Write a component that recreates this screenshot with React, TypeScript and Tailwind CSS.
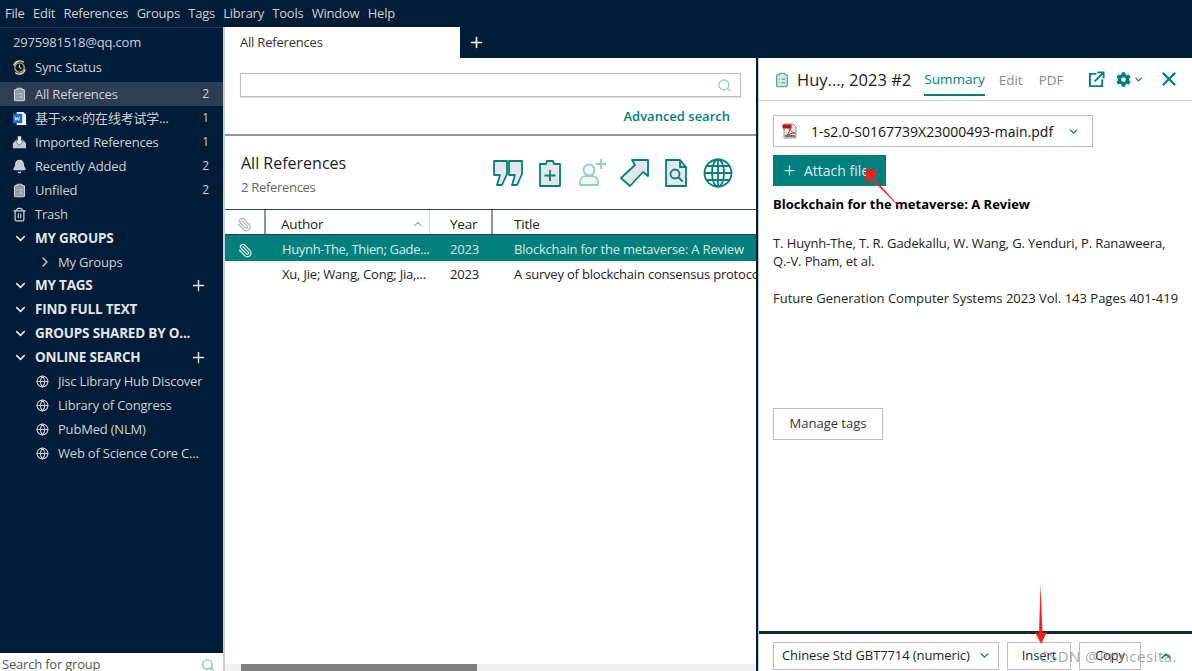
import {
  Bell,
  ChevronDown,
  ChevronRight,
  ChevronUp,
  ClipboardList,
  Globe,
  Paperclip,
  Plus,
  Search,
  Trash2,
  X,
} from 'lucide-react';
import { FaCog } from 'react-icons/fa';

const menus = ['File', 'Edit', 'References', 'Groups', 'Tags', 'Library', 'Tools', 'Window', 'Help'];
const searches = ['Jisc Library Hub Discover', 'Library of Congress', 'PubMed (NLM)', 'Web of Science Core C...'];

function SyncIcon() {
  return (
    <svg viewBox="0 0 16 16" className="size-[15px]" fill="none">
      <circle cx="8" cy="8" r="5" stroke="#d9a441" strokeWidth="1.4" />
      <path d="M2 6a6.5 6.5 0 0 1 10.5-3.5M14 10a6.5 6.5 0 0 1-10.5 3.5" stroke="#d5dade" strokeWidth="1.5" />
      <path d="M8 5v3l2 1" stroke="#d5dade" strokeWidth="1.2" />
    </svg>
  );
}

function WordIcon() {
  return (
    <svg viewBox="0 0 16 16" className="size-[15px]">
      <path d="M5 1h7l3 3v11H5z" fill="#fff" />
      <rect x="1" y="3" width="10" height="10" rx="1" fill="#1769d6" />
      <path d="M3 6l1 4 1.5-3L7 10l1-4" stroke="#fff" strokeWidth="1" fill="none" />
    </svg>
  );
}

function ImportIcon() {
  return (
    <svg viewBox="0 0 16 16" className="size-[15px]">
      <path d="M1 14V9l3-4h8l3 4v5z" fill="#c3cad1" />
      <path d="M6 1h4v5h2.5L8 11 3.5 6H6z" fill="#eef1f3" stroke="#001c37" strokeWidth="0.6" />
    </svg>
  );
}

function SideItem({ icon, label, count, active }: { icon: React.ReactNode; label: string; count?: number; active?: boolean }) {
  return (
    <div className={`flex h-6 items-center pl-3 pr-[14px] text-[#ccd2d8] ${active ? 'bg-[#2c3e52]' : ''}`}>
      <span className="flex w-[23px] shrink-0">{icon}</span>
      <span className="mt-0.5 flex-1 truncate">{label}</span>
      {count !== undefined && <span className="text-xs">{count}</span>}
    </div>
  );
}

function SideHead({ label, plus }: { label: string; plus?: boolean }) {
  return (
    <div className="flex h-6 items-center pl-[13px] pr-4 text-[13.5px] font-bold text-[#e2e6e9]">
      <ChevronDown className="mr-[7px] size-[15px] shrink-0" strokeWidth={2.5} />
      <span className="flex-1 truncate">{label}</span>
      {plus && <Plus className="size-[17px]" strokeWidth={2} />}
    </div>
  );
}

function Sidebar() {
  const listIcon = <ClipboardList className="size-[15px]" fill="#8f9aa5" strokeWidth={1.8} />;
  return (
    <aside className="flex w-[225px] shrink-0 flex-col border-r-2 border-[#c9d0d6] bg-[#001c37] text-[13px] tracking-[-0.2px]">
      <div className="border-t border-[#1d3550] pt-[3px]">
        <div className="flex h-6 items-center pl-[13px] text-[#ccd2d8]">2975981518@qq.com</div>
        <SideItem icon={<SyncIcon />} label="Sync Status" />
      </div>
      <div className="mt-[3px]">
        <SideItem active icon={listIcon} label="All References" count={2} />
        <SideItem icon={<WordIcon />} label="基于×××的在线考试学..." count={1} />
        <SideItem icon={<ImportIcon />} label="Imported References" count={1} />
        <SideItem icon={<Bell className="size-[15px]" fill="#c3cad1" />} label="Recently Added" count={2} />
        <SideItem icon={listIcon} label="Unfiled" count={2} />
        <SideItem icon={<Trash2 className="size-[15px]" />} label="Trash" />
        <SideHead label="MY GROUPS" />
        <div className="flex h-[23px] items-center pl-[37px] text-[#ccd2d8]">
          <ChevronRight className="mr-[5px] size-[16px]" />
          <span className="mt-0.5">My Groups</span>
        </div>
        <SideHead label="MY TAGS" plus />
        <SideHead label="FIND FULL TEXT" />
        <SideHead label="GROUPS SHARED BY O..." />
        <SideHead label="ONLINE SEARCH" plus />
        {searches.map((s) => (
          <div key={s} className="flex h-6 items-center pl-9 pr-3 text-[#ccd2d8]">
            <Globe className="mr-[9px] size-[13px] shrink-0" strokeWidth={2} />
            <span className="mt-0.5 truncate">{s}</span>
          </div>
        ))}
      </div>
      <div className="mt-auto flex h-[18px] items-center overflow-hidden bg-white pl-0.5 pr-2 pt-[5px] text-[#555]">
        <span className="flex-1">Search for group</span>
        <Search className="size-[14px] text-[#6db8b5]" />
      </div>
    </aside>
  );
}

function ToolIcon({ children, faded }: { children: React.ReactNode; faded?: boolean }) {
  return (
    <svg
      viewBox="0 0 30 30"
      className={`size-[30px] ${faded ? 'opacity-40' : ''}`}
      fill="#e3e7ea"
      stroke="#00807c"
      strokeWidth="1.8"
      strokeLinejoin="round"
    >
      {children}
    </svg>
  );
}

function Toolbar() {
  return (
    <div className="flex items-center gap-3">
      <ToolIcon>
        <path d="M1 3h13v13l-5 11H4l3-10H1zM16 3h13v13l-5 11h-5l3-10h-6z" />
      </ToolIcon>
      <ToolIcon>
        <path d="M5 6h6l1-3h6l1 3h6v22H5z" />
        <path d="M15 12v11M9.500 17.500h11" fill="none" />
      </ToolIcon>
      <ToolIcon faded>
        <circle cx="12" cy="12" r="5.500" />
        <path d="M3 27v-3c0-4 3-6 6-6h6c3 0 6 2 6 6v3z" />
        <path d="M24 1v10M19 6h10" fill="none" />
      </ToolIcon>
      <ToolIcon>
        <path d="M13 2h16v16l-5-4-13 14-9-8 14-13z" />
      </ToolIcon>
      <ToolIcon>
        <path d="M5 2h14l6 7v19H5z" />
        <path d="M19 2v7h6" fill="none" />
        <circle cx="14" cy="16" r="4.500" fill="none" />
        <path d="M17.500 19.500l4 4" fill="none" />
      </ToolIcon>
      <ToolIcon>
        <circle cx="15" cy="15" r="13.500" fill="none" />
        <ellipse cx="15" cy="15" rx="6" ry="13.500" fill="none" />
        <path d="M15 1.500v27M1.500 15h27M3.500 8h23M3.500 22h23" fill="none" />
      </ToolIcon>
    </div>
  );
}

function RefTable() {
  return (
    <div className="flex flex-1 flex-col overflow-hidden">
      <div className="flex h-[26px] shrink-0 items-stretch border-y border-[#2c3e52] text-[13.5px] tracking-[-0.2px] text-[#222]">
        <div className="flex w-[41px] shrink-0 items-center justify-center border-r-2 border-[#8a96a3] pt-1">
          <Paperclip className="size-[15px] -scale-x-100 text-[#b5b5b5]" />
        </div>
        <div className="flex w-[164px] shrink-0 items-center justify-between border-r border-[#d5d8dc] pl-[15px] pr-1 pt-1">
          Author
          <ChevronUp className="size-[14px] text-[#b5b5b5]" />
        </div>
        <div className="flex w-[63px] shrink-0 items-center border-r-2 border-[#8a96a3] pl-5 pt-1">Year</div>
        <div className="flex items-center pl-[21px] pt-1">Title</div>
      </div>
      <div className="flex h-[26px] shrink-0 items-center whitespace-nowrap bg-[#00807c] pt-1 text-[13px] tracking-[-0.2px] text-[#d8ecea]">
        <div className="flex w-[41px] shrink-0 justify-center">
          <Paperclip className="size-[15px] -scale-x-100" />
        </div>
        <div className="w-[164px] shrink-0 overflow-hidden pl-4 tracking-[-0.35px]">Huynh-The, Thien; Gade...</div>
        <div className="w-[63px] shrink-0 pl-5">2023</div>
        <div className="pl-[21px]">Blockchain for the metaverse: A Review</div>
      </div>
      <div className="flex h-6 shrink-0 items-center overflow-hidden whitespace-nowrap pt-1 text-[13px] tracking-[-0.2px] text-[#1c1c1c]">
        <div className="w-[41px] shrink-0" />
        <div className="w-[164px] shrink-0 truncate pl-4 pr-0.5">Xu, Jie; Wang, Cong; Jia,...</div>
        <div className="w-[63px] shrink-0 pl-5">2023</div>
        <div className="pl-[21px]">A survey of blockchain consensus protocols</div>
      </div>
      <div className="mt-auto h-[7px] shrink-0 bg-[#f0f0f0] pl-4">
        <div className="h-full w-[236px] bg-[#808080]" />
      </div>
    </div>
  );
}

function MainPane() {
  return (
    <main className="flex w-[531px] shrink-0 flex-col overflow-hidden bg-white">
      <div className="h-[78px] shrink-0 border-b-2 border-[#8a96a3] px-[15px] pt-[15px]">
        <div className="flex h-6 items-center justify-end border border-[#b9bec3] pr-2 shadow-[0_1px_1px_rgba(0,0,0,0.12)]">
          <Search className="size-[15px] text-[#8fc9c6]" />
        </div>
        <div className="mt-[10px] pr-[11px] text-right text-[13px] font-semibold leading-[18px] text-[#00807c]">
          Advanced search
        </div>
      </div>
      <div className="flex h-[73px] shrink-0 items-center justify-between pl-4 pr-[23px]">
        <div className="mt-1">
          <div className="text-[16px] leading-6 text-[#1a1a1a]">All References</div>
          <div className="text-[13px] leading-6 tracking-[-0.3px] text-[#666]">2 References</div>
        </div>
        <Toolbar />
      </div>
      <RefTable />
    </main>
  );
}

function PdfIcon() {
  return (
    <svg viewBox="0 0 16 16" className="size-[16px]">
      <path d="M2 1h9l3 3v11H2z" fill="#e8e8e8" stroke="#777" strokeWidth="0.8" />
      <rect x="0.500" y="1.500" width="9" height="4" fill="#b51212" />
      <path d="M4 13c3-3 4-6 4-9 0 3 2 6 5 6-3 0-6 1-9 3z" fill="none" stroke="#d22" strokeWidth="1" />
      <rect x="3" y="12" width="10" height="2" fill="#777" />
    </svg>
  );
}

function DetailPane() {
  return (
    <section className="flex min-w-0 flex-1 flex-col overflow-hidden border-l-2 border-l-[#001c37] bg-white">
      <div className="flex flex-1 flex-col border-l border-[#c4cbd2]">
        <div className="flex h-[43px] shrink-0 items-stretch border-b border-[#c8ccd2] pl-[15px] pr-3">
          <div className="flex items-center whitespace-nowrap pt-0.5 text-[16.5px] text-[#1c1c1c]">
            <ClipboardList className="mr-[7px] size-[16px] text-[#5fa9a6]" fill="#d5e8e7" />
            Huy..., 2023 #2
          </div>
          <div className="mb-1 ml-[13px] flex items-center border-b-2 border-[#00807c] pt-1.5 text-[13.5px] font-medium text-[#00807c]">
            Summary
          </div>
          <div className="mb-1 ml-[14px] flex items-center pt-1.5 text-[13.5px] text-[#8a8a8a]">Edit</div>
          <div className="mb-1 ml-4 flex items-center pt-1.5 text-[13.5px] text-[#8a8a8a]">PDF</div>
          <div className="ml-auto flex items-center text-[#00807c]">
            <svg viewBox="0 0 18 18" className="size-[17px]" fill="none" stroke="currentColor" strokeWidth="2">
              <path d="M9 3H2v13h13V9M7 11l9-9M10 1.500h6.500V8" />
            </svg>
            <FaCog className="ml-[11px] size-[15px]" />
            <ChevronDown className="ml-0.5 size-[11px]" strokeWidth={2.5} />
            <X className="ml-[14px] size-[22px]" strokeWidth={2.6} />
          </div>
        </div>
        <div className="flex flex-1 flex-col px-[14px] text-[13px] text-[#222]">
          <div className="mt-[14px] flex h-8 w-[320px] items-center border border-[#b9bec3] pl-2 pr-3 text-[#111]">
            <PdfIcon />
            <span className="ml-[13px] flex-1 whitespace-nowrap text-[14px]">1-s2.0-S0167739X23000493-main.pdf</span>
            <ChevronDown className="size-[13px] text-[#00807c]" strokeWidth={2.5} />
          </div>
          <button className="mt-2 flex h-[31px] w-[113px] items-center bg-[#00807c] pl-[9px] text-[14px] text-[#dbeeed]">
            <Plus className="mr-[7px] size-[15px]" strokeWidth={2} />
            Attach file
          </button>
          <div className="mt-[9px] whitespace-nowrap text-[13px] font-bold leading-[18px] text-black">
            Blockchain for the metaverse: A Review
          </div>
          <div className="mt-[21px] text-[13px] leading-[18px] tracking-[-0.1px]">
            T. Huynh-The, T. R. Gadekallu, W. Wang, G. Yenduri, P. Ranaweera, Q.-V. Pham, et al.
          </div>
          <div className="mt-[19px] whitespace-nowrap text-[13px] leading-[18px]">
            Future Generation Computer Systems 2023 Vol. 143 Pages 401-419
          </div>
          <button className="mt-[101px] h-8 w-[110px] border border-[#b9bec3] text-[13px] text-[#333]">Manage tags</button>
        </div>
        <div className="flex h-[40px] shrink-0 items-center border-t-[3px] border-[#12263e] pl-[14px] pr-3 pt-1.5 text-[13px] tracking-[-0.1px] text-[#222]">
          <div className="flex h-7 w-[226px] items-center justify-between whitespace-nowrap border border-[#b9bec3] pl-2 pr-[7px]">
            Chinese Std GBT7714 (numeric)
            <ChevronDown className="size-[13px] text-[#00807c]" strokeWidth={2.5} />
          </div>
          <div className="ml-2 flex h-7 w-[64px] items-center justify-center border border-[#b9bec3]">Insert</div>
          <div className="ml-2 flex h-7 w-[62px] items-center justify-center border border-[#b9bec3]">Copy</div>
          <ChevronUp className="ml-auto mr-[6px] size-[16px] text-[#00807c]" strokeWidth={2.5} />
        </div>
      </div>
    </section>
  );
}

export default function App() {
  return (
    <div
      className="relative flex h-[671px] w-[1192px] flex-col overflow-hidden bg-[#001c37]"
      style={{ fontFamily: '"Open Sans", "Noto Sans CJK SC", sans-serif' }}
    >
      <nav className="flex h-[27px] shrink-0 items-center gap-[8.4px] pl-[5px] text-[13px] tracking-[-0.25px] text-[#ccd2d8]">
        {menus.map((m) => (
          <span key={m}>{m}</span>
        ))}
      </nav>
      <div className="flex min-h-0 flex-1">
        <Sidebar />
        <div className="flex min-w-0 flex-1 flex-col">
          <div className="flex h-[31px] shrink-0 items-stretch">
            <div className="flex w-[235px] items-center bg-white pl-[15px] text-[13px] tracking-[-0.2px] text-[#333]">All References</div>
            <div className="ml-2 flex items-center text-white">
              <Plus className="size-[17px]" strokeWidth={2.2} />
            </div>
          </div>
          <div className="flex min-h-0 flex-1">
            <MainPane />
            <DetailPane />
          </div>
        </div>
      </div>

      {/* annotations pasted on top of the screenshot */}
      <svg className="pointer-events-none absolute left-0 top-0 size-full">
        <polygon points="866,168 878,172 873,177 906,214 871,178.500 866,183" fill="#f5201c" />
        <polygon points="1040.500,584 1042.500,633 1047,632 1041,644 1035,632 1039,633" fill="#f5201c" />
      </svg>
      <div className="pointer-events-none absolute left-[1039px] top-[645px] whitespace-nowrap text-[15px] tracking-[0.5px] text-[#8a8f94]/80">
        CSDN @Princesita.
      </div>
    </div>
  );
}
